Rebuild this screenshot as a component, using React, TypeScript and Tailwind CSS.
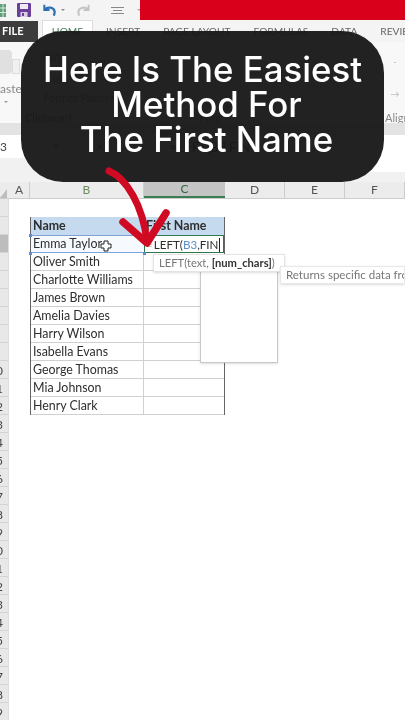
const names = ["Oliver Smith","Charlotte Williams","James Brown","Amelia Davies","Harry Wilson","Isabella Evans","George Thomas","Mia Johnson","Henry Clark"];
const rowNums = Array.from({length: 29}, (_, i) => (i + 1 >= 10 ? String((i + 1) % 10) : "\u00a0"));
const columns = [["D", 60], ["E", 60], ["F", 60]] as const;

export default function App() {
  return (
    <div className="relative w-[405px] h-[720px] overflow-hidden bg-white flex flex-col font-['Lato',sans-serif] text-[#333] blur-[0.35px]">
      {/* title bar */}
      <div className="h-[20px] flex bg-[#f4f4f4] shrink-0">
        <div className="w-[140px] flex items-center">
          <svg className="shrink-0" width="6" height="13" viewBox="0 0 6 13"><rect width="6" height="13" fill="#5f9e78"/><path d="M0 4h6M0 8.5h6M3 0v13" stroke="#d6ead9" strokeWidth="1"/></svg>
          <svg className="ml-[11px] shrink-0" width="14" height="14" viewBox="0 0 14 14"><rect width="14" height="14" rx="1" fill="#6a3f97"/><rect x="3" y="1" width="8" height="5" fill="#efeaf5"/><rect x="3.5" y="9" width="7" height="5" fill="#d8d0e4"/><rect x="5" y="10" width="2" height="3" fill="#6a3f97"/></svg>
          <svg className="ml-[11px] shrink-0" width="15" height="14" viewBox="0 0 16 14" fill="none"><path d="M2.5 1.5v5.5h5.5" stroke="#2e6fb5" strokeWidth="2.2"/><path d="M3 6.5C6 3 13 4 13.5 9c0 1.5-.5 3-1 4" stroke="#2e6fb5" strokeWidth="2.4"/></svg>
          <div className="ml-[4px] w-0 h-0 border-x-[2px] border-t-[2px] border-x-transparent border-t-[#888]" />
          <svg className="ml-[11px] shrink-0" width="15" height="14" viewBox="0 0 16 14" fill="none"><path d="M13.5 1.5v5.5H8" stroke="#c4c4c4" strokeWidth="2"/><path d="M13 6.5C10 3 3 4 2.5 9c0 1.5.5 3 1 4" stroke="#c4c4c4" strokeWidth="2.2"/></svg>
          <div className="ml-[20px] flex flex-col gap-[2px] w-[13px] shrink-0">
            <div className="h-[1px] bg-[#888]" /><div className="h-[1px] mx-[2px] bg-[#888]" /><div className="h-[1px] bg-[#888]" />
          </div>
          <div className="ml-[13px] w-0 h-0 border-x-[2px] border-t-[2px] border-x-transparent border-t-[#aaa]" />
        </div>
        <div className="flex-1 bg-[#d9001b]" />
      </div>
      {/* tabs */}
      <div className="h-[22px] shrink-0 flex items-end bg-[#f4f4f4] text-[10.2px] text-[#666] whitespace-nowrap overflow-hidden">
        <div className="w-[38px] h-[21px] shrink-0 bg-[#3c3c3c] text-white text-[11px] font-bold flex items-center pl-[2px]">FILE</div>
        <div className="w-[51px] h-[22px] shrink-0 ml-[4px] bg-white border border-b-0 border-[#ddd] flex items-center justify-center text-[#4a7a5a]">HOME</div>
        <div className="flex items-center h-[21px] shrink-0 ml-[13px] gap-[23px]">
          <span>INSERT</span><span>PAGE LAYOUT</span><span>FORMULAS</span><span>DATA</span><span>REVIEW</span>
        </div>
      </div>
      {/* ribbon */}
      <div className="h-[81px] shrink-0 bg-[#f8f8f8] flex text-[11px] text-[#777]">
        <div className="w-[24px] shrink-0 flex flex-col pt-[8px] overflow-hidden">
          <div className="flex items-end">
            <div className="w-[12px] h-[24px] bg-[#e0e0e0] rounded-r-sm" />
            <div className="w-[8px] h-[15px] bg-[#f0f0f0] border border-[#ddd]" />
          </div>
          <span className="mt-[6px] -ml-[7px] text-[12px] text-[#888] whitespace-nowrap">Paste</span>
          <div className="mt-[3px] ml-[4px] w-0 h-0 border-x-[2px] border-t-[2px] border-x-transparent border-t-[#999]" />
        </div>
        <div className="flex-1 flex flex-col justify-between min-w-0 pl-[1px] whitespace-nowrap">
          <div className="flex flex-col pt-[7px] pl-[18px] gap-[4px] text-[#888]">
            <span>Cut</span>
            <span className="pl-[2px]">Copy</span>
            <span>Format Painter</span>
          </div>
          <div className="flex leading-[11px]">
            <span>Clipboard</span><span className="ml-[128px]">Font</span>
          </div>
        </div>
        <div className="w-[20px] shrink-0 flex flex-col justify-between whitespace-nowrap">
          <div className="flex flex-col items-center pt-[13px] gap-[18px] text-[#bbb] text-[9px]">
            <span>-</span><span>→</span>
          </div>
          <span className="leading-[11px] text-[#888]">Alignment</span>
        </div>
      </div>
      <div className="h-[12px] shrink-0 bg-[#e3e3e3]" />
      {/* formula bar */}
      <div className="h-[47px] shrink-0 flex bg-[#f1f1f1] text-[12px] items-start">
        <div className="w-[170px] h-[23px] bg-white flex items-center text-[#444]">
          <span className="w-[53px]">3</span>
          <div className="w-0 h-0 border-x-[3px] border-t-[3px] border-x-transparent border-t-[#888]" />
          <span className="ml-[36px] text-[#888]">✕</span>
          <span className="ml-[16px] text-[#888]">✓</span>
        </div>
        <div className="flex-1 h-[37px] bg-white pt-[3px] text-[13px] text-[#444]">=LEFT(B3,FIN</div>
      </div>
      {/* column headings */}
      <div className="h-[17px] shrink-0 flex bg-[#ececec] border-b border-[#ccc] text-[12px] text-[#555]" >
        <div className="w-[9px] flex items-end"><div className="w-0 h-0 border-b-[9px] border-l-[7px] border-l-transparent border-b-[#bdbdbd]" /></div>
        <div className="w-[21px] flex items-center justify-center border-r border-[#ccc]">A</div>
        <div className="w-[114px] flex items-center justify-center border-r border-[#ccc] text-[#6d8a5f]">B</div>
        <div className="w-[81px] flex items-center justify-center bg-[#c4c4c4] border-b-2 border-[#3a7d52] text-[#2e6b45]">C</div>
        {columns.map(([c, w]) => (
          <div key={c} style={{ width: w }} className="flex items-center justify-center border-r border-[#ccc]">{c}</div>
        ))}
      </div>
      {/* sheet */}
      <div className="flex-1 flex min-h-0">
        <div className="w-[9px] shrink-0 bg-[#e8e8e8] overflow-hidden text-[12px] text-[#444] border-r border-[#ddd]">
          {rowNums.map((n, i) => (
            <div key={i} className={"h-[18px] border-b border-[#d4d4d4] flex items-center justify-end pr-[5px] pt-[2px] " + (i === 2 ? "bg-[#bdbdbd]" : "")}>{n}</div>
          ))}
        </div>
        <div className="pl-[21px] pt-[18px]">
          <div className="w-[195px] border-x border-[#666] text-[12.4px] text-[#2e2e2e]">
            <div className="h-[18px] flex bg-[#c5daee] font-bold">
              <div className="w-[113px] pl-[2px] pt-[1px] flex items-center">Name</div>
              <div className="flex-1 pl-[1px] pt-[1px] flex items-center border-l border-[#a8bccf]">First Name</div>
            </div>
            <div className="h-[18px] flex">
              <div className="w-[113px] pl-[2px] pt-[1px] flex items-center border-y border-[#7ba3d8] bg-[#f6f9fd]">Emma Taylor</div>
              <div className="flex-1 pl-[1px] pt-[1px] flex items-center border border-[#2f7a4c] whitespace-nowrap overflow-hidden text-[11.6px]">
                <span className="text-[#d8c8a0] mr-[1px]">=</span><span>LEFT(</span><span className="text-[#5b8fd0]">B3</span><span>,FIN</span><span className="w-px h-[14px] bg-[#222] ml-px" />
              </div>
            </div>
            {names.map((n) => (
              <div key={n} className="h-[18px] flex border-b border-[#d0d0d0]">
                <div className="w-[113px] pl-[2px] pt-[2px] flex items-center border-r border-[#d0d0d0]">{n}</div>
                <div className="flex-1" />
              </div>
            ))}
          </div>
        </div>
      </div>

      {/* selection handles */}
      <div className="absolute left-[29px] top-[234px] w-[3px] h-[3px] bg-[#5b8fd0]" />
      <div className="absolute left-[29px] top-[252px] w-[3px] h-[3px] bg-[#5b8fd0]" />
      <div className="absolute left-[143px] top-[252px] w-[3px] h-[3px] bg-[#5b8fd0]" />
      {/* mouse cursor */}
      <svg className="absolute left-[100px] top-[240px]" width="12" height="12" viewBox="0 0 12 12"><path d="M4 1h4v3h3v4H8v3H4V8H1V4h3z" fill="#fff" stroke="#222" strokeWidth="1"/></svg>
      {/* autocomplete list + tooltips */}
      <div className="absolute left-[200px] top-[270px] w-[78px] h-[93px] bg-white border border-[#c8c8c8] shadow-sm" />
      <div className="absolute left-[153px] top-[254px] w-[132px] h-[18px] bg-white border border-[#e4e4e4] shadow-sm flex items-center pl-[5px] text-[11.2px] text-[#777] whitespace-nowrap">
        LEFT(text,&nbsp;<b className="text-[#333]">[num_chars]</b>)
      </div>
      <div className="absolute left-[280px] top-[266px] w-[125px] h-[18px] bg-white border border-[#e8e8e8] shadow-sm flex items-center pl-[5px] text-[11.5px] text-[#777] whitespace-nowrap overflow-hidden">
        Returns specific data from
      </div>
      {/* caption */}
      <div className="absolute left-[21px] top-[31px] w-[363px] h-[151px] pb-[4px] rounded-[42px] bg-[#161616]/95 flex flex-col items-center justify-center text-white text-[34.8px] leading-[35px] font-medium font-['Inter',sans-serif]">
        <span>Here Is The Easiest</span>
        <span className="pl-[8px]">Method For</span>
        <span className="pl-[8px]">The First Name</span>
      </div>
      {/* arrow */}
      <svg className="absolute left-[100px] top-[160px]" width="80" height="95" viewBox="0 0 80 95" fill="none">
        <path d="M9 11 C26 18 43 45 47 82" stroke="#cf0a22" strokeWidth="7" strokeLinecap="round"/>
        <path d="M23 62 L47 83 L66 53" stroke="#cf0a22" strokeWidth="7.5" strokeLinecap="round" strokeLinejoin="round"/>
      </svg>
    </div>
  );
}
